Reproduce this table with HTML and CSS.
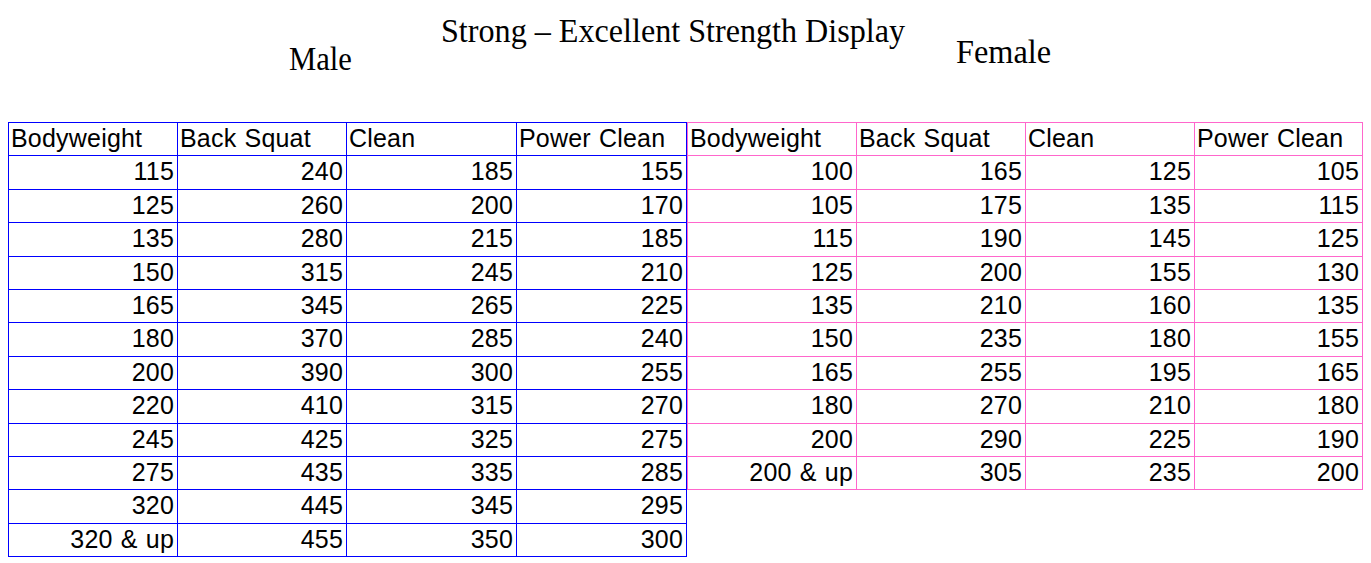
FILE: index.html
```html
<!DOCTYPE html>
<html lang="en">
<head>
<meta charset="utf-8">
<title>Strong – Excellent Strength Display</title>
<link rel="stylesheet" href="styles.css">
</head>
<body>
<div class="page">
  <header class="titles">
    <div class="label label-male">Male</div>
    <h1 class="title">Strong – Excellent Strength Display</h1>
    <div class="label label-female">Female</div>
  </header>
  <div class="tables">
    <table class="chart chart-male">
      <colgroup><col class="c1"><col class="c2"><col class="c3"><col class="c4"></colgroup>
      <thead>
        <tr><th>Bodyweight</th><th>Back Squat</th><th>Clean</th><th>Power Clean</th></tr>
      </thead>
      <tbody>
        <tr><td>115</td><td>240</td><td>185</td><td>155</td></tr>
        <tr><td>125</td><td>260</td><td>200</td><td>170</td></tr>
        <tr><td>135</td><td>280</td><td>215</td><td>185</td></tr>
        <tr><td>150</td><td>315</td><td>245</td><td>210</td></tr>
        <tr><td>165</td><td>345</td><td>265</td><td>225</td></tr>
        <tr><td>180</td><td>370</td><td>285</td><td>240</td></tr>
        <tr><td>200</td><td>390</td><td>300</td><td>255</td></tr>
        <tr><td>220</td><td>410</td><td>315</td><td>270</td></tr>
        <tr><td>245</td><td>425</td><td>325</td><td>275</td></tr>
        <tr><td>275</td><td>435</td><td>335</td><td>285</td></tr>
        <tr><td>320</td><td>445</td><td>345</td><td>295</td></tr>
        <tr><td>320 &amp; up</td><td>455</td><td>350</td><td>300</td></tr>
      </tbody>
    </table>
    <table class="chart chart-female">
      <colgroup><col class="c1"><col class="c2"><col class="c3"><col class="c4f"></colgroup>
      <thead>
        <tr><th>Bodyweight</th><th>Back Squat</th><th>Clean</th><th>Power Clean</th></tr>
      </thead>
      <tbody>
        <tr><td>100</td><td>165</td><td>125</td><td>105</td></tr>
        <tr><td>105</td><td>175</td><td>135</td><td>115</td></tr>
        <tr><td>115</td><td>190</td><td>145</td><td>125</td></tr>
        <tr><td>125</td><td>200</td><td>155</td><td>130</td></tr>
        <tr><td>135</td><td>210</td><td>160</td><td>135</td></tr>
        <tr><td>150</td><td>235</td><td>180</td><td>155</td></tr>
        <tr><td>165</td><td>255</td><td>195</td><td>165</td></tr>
        <tr><td>180</td><td>270</td><td>210</td><td>180</td></tr>
        <tr><td>200</td><td>290</td><td>225</td><td>190</td></tr>
        <tr><td>200 &amp; up</td><td>305</td><td>235</td><td>200</td></tr>
      </tbody>
    </table>
  </div>
</div>
</body>
</html>
```
FILE: styles.css
```css
html, body {
  margin: 0;
  padding: 0;
  background: #ffffff;
  color: #000000;
}

.page {
  width: 1371px;
}

.titles {
  height: 122px;
  box-sizing: border-box;
  padding-left: 289px;
  display: grid;
  grid-template-columns: 152px 515px auto;
  align-items: start;
}

.label,
.title {
  margin: 0;
  font-family: "Liberation Serif", "Times New Roman", serif;
  font-weight: normal;
  font-size: 34px;
  line-height: 34px;
  white-space: nowrap;
  transform: scaleX(0.945);
  transform-origin: left top;
}

.title {
  margin-top: 14px;
}

.label-male {
  margin-top: 42px;
  transform: scaleX(0.9);
}

.label-female {
  margin-top: 35px;
  transform: scaleX(0.95);
}

.tables {
  display: flex;
  align-items: flex-start;
  padding-left: 8px;
}

.chart {
  box-sizing: border-box;
  table-layout: fixed;
  border-collapse: separate;
  border-spacing: 0;
  font-family: "Liberation Sans", Arial, sans-serif;
  font-size: 25px;
  line-height: 28px;
  letter-spacing: 0.2px;
  word-spacing: 1px;
}

.chart-male {
  width: 679px;
  border-left: 1px solid #0000ff;
  border-top: 1px solid #0000ff;
}

.chart-female {
  width: 676px;
  border-left: 1px solid #ff66cc;
  border-top: 1px solid #ff66cc;
}

.c1 { width: 169px; }
.c2 { width: 169px; }
.c3 { width: 170px; }
.c4 { width: 170px; }
.c4f { width: 168px; }

.chart-female .c3 { width: 169px; }

.chart tr {
  height: 33.4px;
}

.chart th,
.chart td {
  box-sizing: border-box;
  padding: 1px 3px 0 2px;
  vertical-align: top;
  white-space: nowrap;
  overflow: hidden;
}

.chart th {
  text-align: left;
  font-weight: normal;
}

.chart td {
  text-align: right;
}

.chart-male th,
.chart-male td {
  border-right: 1px solid #0000ff;
  border-bottom: 1px solid #0000ff;
}

.chart-female th,
.chart-female td {
  border-right: 1px solid #ff66cc;
  border-bottom: 1px solid #ff66cc;
}
```
